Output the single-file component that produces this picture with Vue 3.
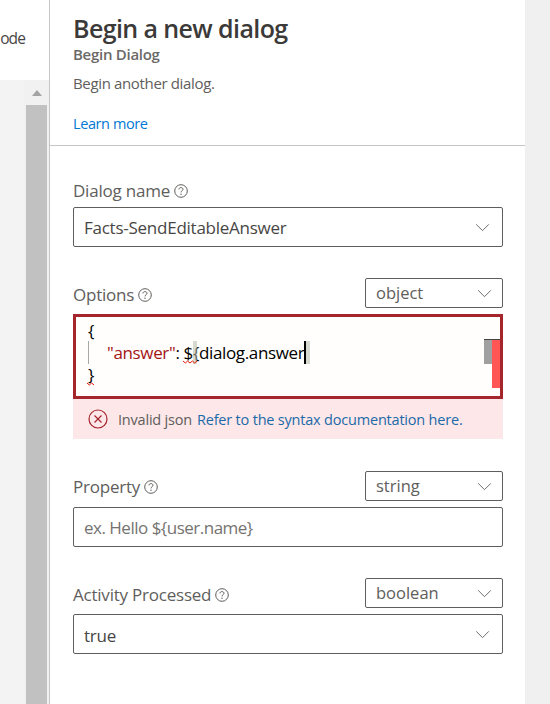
<script setup>
</script>

<template>
  <div class="page">
    <svg class="defs" width="0" height="0">
      <symbol id="help" viewBox="0 0 14 14">
        <circle cx="7" cy="7" r="6.3" fill="none" stroke="currentColor" stroke-width="1" />
        <path d="M5 5.4C5 4.2 5.9 3.6 7 3.6S9 4.3 9 5.3C9 6.7 7 6.6 7 8.4" fill="none" stroke="currentColor" stroke-width="1" />
        <circle cx="7" cy="10.2" r=".7" fill="currentColor" />
      </symbol>
      <symbol id="chev" viewBox="0 0 16 10">
        <path d="M1 1.5L8 8.5L15 1.5" fill="none" stroke="currentColor" stroke-width="1" />
      </symbol>
    </svg>

    <aside class="left">
      <div class="left-top"><span>ode</span></div>
      <div class="left-body">
        <div class="scrollbar">
          <div class="arrow-cell"><span class="arrow"></span></div>
          <div class="thumb"></div>
        </div>
      </div>
    </aside>

    <main class="panel">
      <header class="head">
        <h1>Begin a new dialog</h1>
        <h2>Begin Dialog</h2>
        <p>Begin another dialog.</p>
        <a class="learn">Learn more</a>
      </header>

      <section class="form">
        <div class="field first">
          <div class="row">
            <label>Dialog name <svg class="help"><use href="#help" /></svg></label>
          </div>
          <div class="box">
            <span>Facts-SendEditableAnswer</span>
            <svg class="chev"><use href="#chev" /></svg>
          </div>
        </div>

        <div class="field errored">
          <div class="row">
            <label>Options <svg class="help"><use href="#help" /></svg></label>
            <div class="mini"><span>object</span><svg class="chev"><use href="#chev" /></svg></div>
          </div>
          <div class="editor">
            <div class="line"><span class="brace">{</span></div>
            <div class="line second"><span class="str">"answer"</span><span class="plain">: ${dialog.answer</span></div>
            <div class="line"><span class="brace">}</span></div>
            <span class="guide"></span>
            <span class="match m1"></span>
            <span class="match m2"></span>
            <span class="cursor"></span>
            <svg class="squiggle s1" viewBox="0 0 14 4"><path d="M0 1L2.3 3L4.6 1L7 3L9.3 1L11.6 3L14 1" /></svg>
            <svg class="squiggle s2" viewBox="0 0 7 4"><path d="M0 1L2.3 3L4.6 1L7 3" /></svg>
            <div class="ruler">
              <span class="ruler-line"></span>
              <span class="ruler-gray"></span>
              <span class="ruler-red"></span>
            </div>
          </div>
          <div class="error">
            <svg class="err-icon" viewBox="0 0 20 20">
              <circle cx="10" cy="10" r="9" />
              <path d="M6.5 6.5L13.5 13.5M13.5 6.5L6.5 13.5" />
            </svg>
            <span class="err-text">Invalid json</span>
            <a class="err-link">Refer to the syntax documentation here.</a>
          </div>
        </div>

        <div class="field tight">
          <div class="row">
            <label>Property <svg class="help"><use href="#help" /></svg></label>
            <div class="mini"><span>string</span><svg class="chev"><use href="#chev" /></svg></div>
          </div>
          <div class="box placeholder"><span>ex. Hello ${user.name}</span></div>
        </div>

        <div class="field">
          <div class="row">
            <label>Activity Processed <svg class="help"><use href="#help" /></svg></label>
            <div class="mini"><span>boolean</span><svg class="chev"><use href="#chev" /></svg></div>
          </div>
          <div class="box lower">
            <span>true</span>
            <svg class="chev"><use href="#chev" /></svg>
          </div>
        </div>
      </section>
    </main>

    <div class="gutter"></div>
  </div>
</template>

<style>
html, body { margin: 0; background: #fff; overflow: hidden; }
</style>

<style scoped>
.page {
  display: flex;
  width: 550px;
  height: 704px;
  overflow: hidden;
  font-family: "Open Sans", "Noto Sans", sans-serif;
  color: #323130;
}
.defs { position: absolute; }

.left {
  flex: 0 0 50px;
  width: 50px;
  min-width: 0;
  overflow: hidden;
  display: flex;
  flex-direction: column;
  border-right: 1px solid #c8c6c4;
  box-sizing: border-box;
}
.left-top {
  height: 80px;
  display: flex;
  justify-content: flex-end;
  padding: 25px 24px 0 0;
  box-sizing: border-box;
  font-size: 15.5px;
  letter-spacing: -0.9px;
  line-height: 26px;
  color: #484644;
}
.left-body {
  flex: 1;
  background: #f3f3f3;
  display: flex;
  justify-content: flex-end;
}
.scrollbar {
  width: 25px;
  display: flex;
  flex-direction: column;
  align-items: flex-end;
  background: #f1f1f1;
}
.arrow-cell {
  width: 25px;
  height: 25px;
  display: flex;
  justify-content: center;
  padding-top: 10px;
  box-sizing: border-box;
}
.arrow {
  width: 0;
  height: 0;
  border-left: 5.5px solid transparent;
  border-right: 5.5px solid transparent;
  border-bottom: 6px solid #a3a3a3;
}
.thumb {
  flex: 1;
  width: 21px;
  margin-right: 2px;
  background: #c1c1c1;
}

.panel {
  flex: 0 0 475px;
  display: flex;
  flex-direction: column;
}
.head {
  height: 146px;
  box-sizing: border-box;
  padding: 12px 23px 0;
  border-bottom: 1px solid #c8c6c4;
}
h1 {
  margin: 0;
  font-size: 25px;
  line-height: 32px;
  font-weight: 600;
  letter-spacing: -0.6px;
  color: #3b3a39;
}
h2 {
  margin: 0;
  font-size: 15px;
  line-height: 20px;
  font-weight: 600;
  letter-spacing: -0.28px;
  color: #6b6967;
}
.head p {
  margin: 9px 0 0;
  font-size: 15px;
  line-height: 20px;
  letter-spacing: -0.35px;
  color: #605e5c;
}
.learn {
  display: block;
  margin-top: 21px;
  font-size: 14.5px;
  line-height: 20px;
  letter-spacing: -0.4px;
  color: #0078d4;
}

.form {
  display: flex;
  flex-direction: column;
  gap: 31px;
  padding: 25px 22px 0 23px;
}
.row {
  display: flex;
  justify-content: space-between;
  align-items: flex-end;
  height: 30px;
  margin-bottom: 6px;
}
.first .row { margin-bottom: 0; height: 36px; }
.first label { padding-bottom: 4px; }
.tight label { padding-bottom: 2px; }
label {
  display: flex;
  align-items: center;
  gap: 4px;
  font-size: 17px;
  line-height: 24px;
  letter-spacing: -0.22px;
  color: #605e5c;
  padding-bottom: 1px;
}
.help {
  width: 14px;
  height: 14px;
  color: #605e5c;
}
.box {
  height: 40px;
  box-sizing: border-box;
  border: 1px solid #605e5c;
  border-radius: 2px;
  display: flex;
  align-items: center;
  justify-content: space-between;
  padding: 1px 12px 0 10px;
  font-size: 17px;
  letter-spacing: -0.25px;
  color: #484644;
}
.lower { padding-top: 3px; }
.lower .chev { margin-top: -3px; }
.placeholder { color: #757371; letter-spacing: -0.5px; }
.mini {
  width: 138px;
  height: 30px;
  box-sizing: border-box;
  border: 1px solid #605e5c;
  border-radius: 2px;
  display: flex;
  align-items: center;
  justify-content: space-between;
  padding: 0 10px 2px;
  font-size: 16.5px;
  color: #605e5c;
}
.mini .chev { margin-top: 2px; }
.chev {
  width: 15px;
  height: 9px;
  color: #605e5c;
  flex: none;
}

.editor {
  position: relative;
  height: 85px;
  box-sizing: border-box;
  border: 3px solid #a4262c;
  padding: 3px 0 0 12px;
  background: #fffefc;
  font-size: 17px;
  letter-spacing: -0.35px;
  color: #000;
}
.line { height: 22px; line-height: 22px; }
.second { padding-left: 19px; }
.str { color: #a31515; }
.guide {
  position: absolute;
  left: 12px;
  top: 24px;
  width: 1px;
  height: 23px;
  background: #a8a8a8;
}
.match {
  position: absolute;
  top: 24px;
  width: 4px;
  height: 23px;
  background: rgba(180, 185, 170, 0.55);
}
.m1 { left: 117px; }
.m2 { left: 230px; }
.cursor {
  position: absolute;
  left: 228px;
  top: 24px;
  width: 2px;
  height: 23px;
  background: #000;
}
.squiggle {
  position: absolute;
  fill: none;
  stroke: #e51400;
  stroke-width: 1;
}
.s1 { left: 107px; top: 43px; width: 14px; height: 4px; }
.s2 { left: 11px; top: 65px; width: 7px; height: 4px; }
.ruler {
  position: absolute;
  right: 0;
  top: 0;
  bottom: 0;
  width: 16px;
}
.ruler-line {
  position: absolute;
  left: 0;
  right: 0;
  top: 22px;
  height: 1px;
  background: #444;
}
.ruler-gray {
  position: absolute;
  left: 0;
  top: 23px;
  width: 8px;
  height: 24px;
  background: #a0a0a0;
}
.ruler-red {
  position: absolute;
  left: 8px;
  top: 23px;
  width: 8px;
  height: 48px;
  background: #ff5555;
}

.error {
  height: 40px;
  margin-bottom: 1px;
  background: #fde7e9;
  display: flex;
  align-items: center;
  padding-left: 15px;
  font-size: 14.5px;
  letter-spacing: -0.2px;
}
.err-icon {
  width: 20px;
  height: 20px;
  margin-right: 10px;
  fill: none;
  stroke: #a4262c;
  stroke-width: 1.2;
}
.err-text { color: #605e5c; margin-right: 5px; }
.err-link { color: #1b6aa8; }

.gutter {
  flex: 1;
  background: #f0f0f0;
}
</style>
